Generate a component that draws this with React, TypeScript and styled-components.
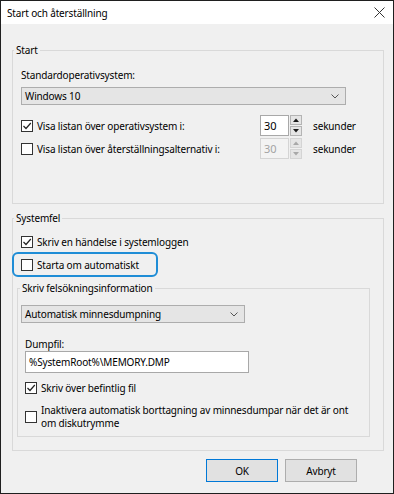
import React from "react";
import styled, { createGlobalStyle } from "styled-components";

const GlobalStyle = createGlobalStyle`
  html, body {
    margin: 0;
    padding: 0;
    background: #ffffff;
  }
  body {
    font-family: "Noto Sans", "Open Sans", sans-serif;
    font-size: 10px;
    letter-spacing: -0.15px;
    color: #000000;
  }
`;

const Window = styled.div`
  // whole dialog with its dark frame
  width: 394px;
  height: 494px;
  box-sizing: border-box;
  border: 1px solid #1f1f1f;
  background: #f0f0f0;
  display: flex;
  flex-direction: column;
`;
const TitleBar = styled.div`
  height: 23px;
  background: #ffffff;
  display: flex;
  align-items: center;
  justify-content: space-between;
  padding: 0 8px 0 6px;
  font-size: 10px;
`;
const Body = styled.div`
  display: flex;
  flex-direction: column;
  padding: 26px 9px 0 11px;
`;
const Group = styled.div<{ $height: number }>`
  // etched group box
  box-sizing: border-box;
  height: ${(props) => props.$height}px;
  border: 1px solid #d9d9d9;
  padding: 0 8px 0 8px;
  display: flex;
  flex-direction: column;
  align-items: flex-start;
`;
const InnerGroup = styled(Group)`
  align-self: stretch;
  margin: 11px 5px 0 -4px;
  padding: 0 7px;
`;
const GroupTitle = styled.div<{ $shift: number }>`
  margin: -8px 0 0 ${(props) => props.$shift}px;
  padding: 0 2px;
  line-height: 14px;
  background: #f0f0f0;
`;
const FieldLabel = styled.div<{ $top: number }>`
  margin-top: ${(props) => props.$top}px;
  line-height: 14px;
`;
const ComboBox = styled.div<{ $width: number; $top: number; $shift?: number }>`
  box-sizing: border-box;
  width: ${(props) => props.$width}px;
  height: 18px;
  margin: ${(props) => props.$top}px 0 0 ${(props) => props.$shift ?? 0}px;
  background: #e5e5e5;
  border: 1px solid #adadad;
  display: flex;
  align-items: center;
  justify-content: space-between;
  padding: 0 6px 0 3px;
`;
const TextBox = styled.div<{ $width: number }>`
  box-sizing: border-box;
  width: ${(props) => props.$width}px;
  height: 22px;
  background: #ffffff;
  border: 1px solid #a8a8a8;
  display: flex;
  align-items: center;
  padding: 0 3px;
`;
const SpinRow = styled.div<{ $top: number }>`
  display: grid;
  grid-template-columns: 239px 42px auto;
  align-items: center;
  margin-top: ${(props) => props.$top}px;
`;
const Spinner = styled.div<{ $disabled?: boolean }>`
  display: flex;
  height: 21px;
  color: ${(props) => (props.$disabled ? "#a3a3a3" : "#000000")};
`;
const SpinField = styled.div<{ $disabled?: boolean }>`
  box-sizing: border-box;
  width: 29px;
  background: ${(props) => (props.$disabled ? "#f3f3f3" : "#ffffff")};
  border: 1px solid ${(props) => (props.$disabled ? "#d4d4d4" : "#a8a8a8")};
  display: flex;
  align-items: center;
  padding-left: 3px;
  font-size: 11px;
`;
const SpinButtons = styled.div`
  display: flex;
  flex-direction: column;
  gap: 1px;
  margin-left: 1px;
`;
const SpinButton = styled.div<{ $disabled?: boolean }>`
  box-sizing: border-box;
  width: 12px;
  height: 10px;
  background: #e5e5e5;
  border: 1px solid ${(props) => (props.$disabled ? "#d4d4d4" : "#b4b4b4")};
  display: flex;
  align-items: center;
  justify-content: center;
`;
const Unit = styled.div`
  margin-left: 11px;
`;
const CheckRow = styled.div<{ $top: number }>`
  display: flex;
  align-items: center;
  gap: 4px;
  margin-top: ${(props) => props.$top}px;
  line-height: 16px;
`;
const MultiCheckRow = styled(CheckRow)`
  line-height: 13px;
`;
const Box = styled.span`
  box-sizing: border-box;
  width: 12px;
  height: 12px;
  flex: none;
  background: #ffffff;
  border: 1px solid #333333;
  display: flex;
  align-items: center;
  justify-content: center;
`;
const Highlight = styled.div`
  // annotation ring drawn round one option
  box-sizing: border-box;
  height: 25px;
  width: 146px;
  margin: 2px 0 0 -9px;
  padding-left: 7px;
  border: 2px solid #1f8dd6;
  border-radius: 6px;
  display: flex;
  align-items: center;
`;
const ButtonRow = styled.div`
  display: flex;
  justify-content: flex-end;
  gap: 7px;
  margin: 8px 27px 0 0;
`;
const Button = styled.button<{ $primary?: boolean }>`
  box-sizing: border-box;
  width: 72px;
  height: 23px;
  font: inherit;
  letter-spacing: inherit;
  color: #000000;
  background: #e1e1e1;
  border: 1px solid ${(props) => (props.$primary ? "#0078d7" : "#adadad")};
  padding: 0;
`;

function Check({ checked }: { checked?: boolean }) {
  return (
    <Box>
      {checked && (
        <svg width="10" height="10" viewBox="0 0 10 10">
          <path d="M1.5 5 L4 7.5 L8.8 2" fill="none" stroke="#222" strokeWidth="1.2" />
        </svg>
      )}
    </Box>
  );
}

function Chevron() {
  return (
    <svg width="8" height="5" viewBox="0 0 8 5">
      <path d="M0.5 0.5 L4 4 L7.5 0.5" fill="none" stroke="#555" strokeWidth="1" />
    </svg>
  );
}

function Arrow({ up, disabled }: { up?: boolean; disabled?: boolean }) {
  return (
    <svg width="6" height="4" viewBox="0 0 6 4">
      <path
        d={up ? "M0 4 L3 0.5 L6 4 Z" : "M0 0 L3 3.5 L6 0 Z"}
        fill={disabled ? "#a8a8a8" : "#1a1a1a"}
      />
    </svg>
  );
}

function Spin({ value, disabled }: { value: string; disabled?: boolean }) {
  return (
    <Spinner $disabled={disabled}>
      <SpinField $disabled={disabled}>{value}</SpinField>
      <SpinButtons>
        <SpinButton $disabled={disabled}>
          <Arrow up disabled={disabled} />
        </SpinButton>
        <SpinButton $disabled={disabled}>
          <Arrow disabled={disabled} />
        </SpinButton>
      </SpinButtons>
    </Spinner>
  );
}

export default function App() {
  return (
    <>
      <GlobalStyle />
      <Window>
        <TitleBar>
          <span>Start och återställning</span>
          <svg width="11" height="11" viewBox="0 0 11 11">
            <path d="M0.5 0.5 L10.5 10.5 M10.5 0.5 L0.5 10.5" stroke="#333" strokeWidth="1" />
          </svg>
        </TitleBar>
        <Body>
          <Group $height={154}>
            <GroupTitle $shift={-7}>Start</GroupTitle>
            <FieldLabel $top={11}>Standardoperativsystem:</FieldLabel>
            <ComboBox $width={325} $top={5}>
              <span>Windows 10</span>
              <Chevron />
            </ComboBox>
            <SpinRow $top={10}>
              <CheckRow $top={0}>
                <Check checked />
                <span>Visa listan över operativsystem i:</span>
              </CheckRow>
              <Spin value="30" />
              <Unit>sekunder</Unit>
            </SpinRow>
            <SpinRow $top={2}>
              <CheckRow $top={0}>
                <Check />
                <span>Visa listan över återställningsalternativ i:</span>
              </CheckRow>
              <Spin value="30" disabled />
              <Unit>sekunder</Unit>
            </SpinRow>
          </Group>
          <Group $height={233} style={{ marginTop: 14 }}>
            <GroupTitle $shift={-7}>Systemfel</GroupTitle>
            <CheckRow $top={9}>
              <Check checked />
              <span>Skriv en händelse i systemloggen</span>
            </CheckRow>
            <Highlight>
              <CheckRow $top={0}>
                <Check />
                <span>Starta om automatiskt</span>
              </CheckRow>
            </Highlight>
            <InnerGroup $height={149}>
              <GroupTitle $shift={-5}>Skriv felsökningsinformation</GroupTitle>
              <ComboBox $width={224} $top={10} $shift={-4}>
                <span>Automatisk minnesdumpning</span>
                <Chevron />
              </ComboBox>
              <FieldLabel $top={14}>Dumpfil:</FieldLabel>
              <TextBox $width={224}>%SystemRoot%\MEMORY.DMP</TextBox>
              <CheckRow $top={7}>
                <Check checked />
                <span>Skriv över befintlig fil</span>
              </CheckRow>
              <MultiCheckRow $top={8}>
                <Check />
                <span>
                  Inaktivera automatisk borttagning av minnesdumpar när det är ont
                  <br />
                  om diskutrymme
                </span>
              </MultiCheckRow>
            </InnerGroup>
          </Group>
          <ButtonRow>
            <Button $primary>OK</Button>
            <Button>Avbryt</Button>
          </ButtonRow>
        </Body>
      </Window>
    </>
  );
}
